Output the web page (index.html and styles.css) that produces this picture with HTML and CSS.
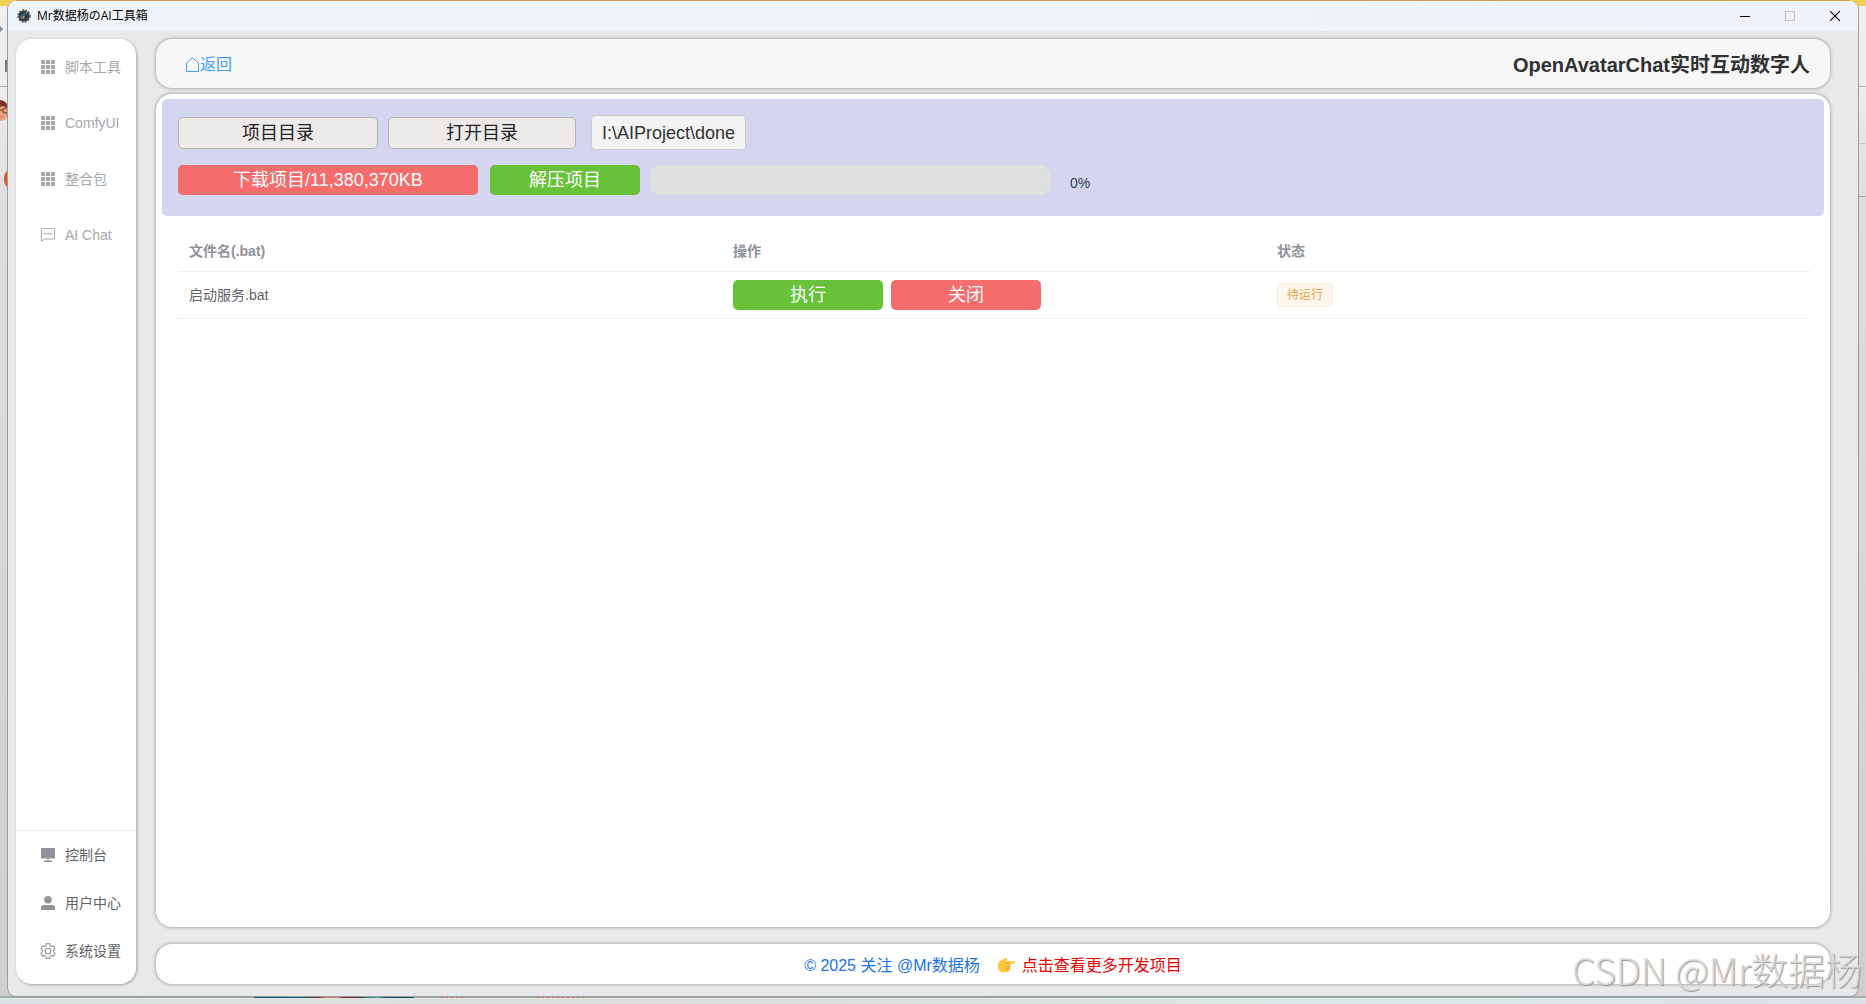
FILE: index.html
```
<!DOCTYPE html>
<html lang="zh-CN">
<head>
<meta charset="utf-8">
<title>Mr数据杨のAI工具箱</title>
<link rel="stylesheet" href="styles.css">
</head>
<body>
<svg class="sprites" aria-hidden="true">
  <symbol id="grid" viewBox="0 0 14 14"><path d="M0 0h4v4H0zM5 0h4v4H5zM10 0h4v4h-4zM0 5h4v4H0zM5 5h4v4H5zM10 5h4v4h-4zM0 10h4v4H0zM5 10h4v4H5zM10 10h4v4h-4z" fill="currentColor"/></symbol>
</svg>

<div class="desktop" aria-hidden="true">
  <span class="peek tab-left"></span>
  <span class="peek tab-right"></span>
  <svg class="peek avatar" viewBox="0 0 8 21"><path d="M0 5h8v12l-3 3-5 1z" fill="#e5a27c"/><path d="M0 0l4 1 4 4v3L3 6 0 7z" fill="#7c3029"/><rect x="3" y="8" width="5" height="5" rx="2" fill="none" stroke="#5c3a2c"/><path d="M0 10h3" stroke="#5c3a2c"/><path d="M0 17h3" stroke="#d4536a"/></svg>
  <svg class="peek glyph" viewBox="0 0 8 12"><path d="M8 1H6v10h2" fill="none" stroke="#555" stroke-width="1.5"/></svg>
  <svg class="peek arrow" viewBox="0 0 3 6"><path d="M0 0l3 3-3 3z" fill="#888"/></svg>
  <svg class="peek dot" viewBox="0 0 8 26"><circle cx="13" cy="13" r="13" fill="#e35330"/></svg>
  <span class="peek strip"></span>
  <span class="peek strip-text one"></span>
  <span class="peek strip-text two"></span>
</div>

<div class="window">
  <header class="titlebar">
    <svg class="app-icon" viewBox="0 0 14 14"><circle cx="7" cy="7" r="5.5" fill="#343a40"/><circle cx="7" cy="7" r="6" fill="none" stroke="#555b60" stroke-width="1.5" stroke-dasharray="2 1.2"/><path d="M3 8l4-4 1 2-3 4z" fill="#2c7d9c"/><path d="M5 9l2-2 1 1-2 2z" fill="#d8a838"/><path d="M8 4l2-1v2z" fill="#a99c8a"/></svg>
    <span class="app-name">Mr数据杨のAI工具箱</span>
    <button class="win-btn" aria-label="最小化"><svg viewBox="0 0 10 10"><path d="M0 5.5h10" stroke="#000"/></svg></button>
    <button class="win-btn" aria-label="最大化" disabled><svg viewBox="0 0 10 10"><rect x=".5" y=".5" width="9" height="9" fill="none" stroke="#bfc3c8"/></svg></button>
    <button class="win-btn" aria-label="关闭窗口"><svg viewBox="0 0 10 10"><path d="M0 0l10 10M10 0L0 10" stroke="#000" stroke-width="1.1"/></svg></button>
  </header>

  <div class="app">
    <aside class="sidebar">
      <nav class="nav-top">
        <a href="#scripts"><svg><use href="#grid"/></svg>脚本工具</a>
        <a href="#comfyui"><svg><use href="#grid"/></svg>ComfyUI</a>
        <a href="#packages"><svg><use href="#grid"/></svg>整合包</a>
        <a href="#chat"><svg viewBox="0 0 14 14"><path d="M.5 13.5v-12a1 1 0 0 1 1-1h11a1 1 0 0 1 1 1v8.500a1 1 0 0 1-1 1H3.500z" fill="none" stroke="currentColor"/><path d="M3 5h2v1.500H3zM6 5h2v1.500H6zM9 5h2v1.500H9z" fill="currentColor"/></svg>AI Chat</a>
      </nav>
      <nav class="nav-bottom">
        <a href="#console"><svg viewBox="0 0 14 14"><path d="M0 0h14v10.500H0zM6.300 10.500h1.400v2h3.300V14H3v-1.500h3.300z" fill="currentColor"/></svg>控制台</a>
        <a href="#user"><svg viewBox="0 0 14 14"><circle cx="7" cy="3.800" r="3.800" fill="currentColor"/><path d="M0 14v-2a3 3 0 0 1 3-3h8a3 3 0 0 1 3 3v2z" fill="currentColor"/></svg>用户中心</a>
        <a href="#settings"><svg viewBox="0 0 1024 1024" class="gear"><path fill="currentColor" d="M600.704 64a32 32 0 0 1 30.464 22.208l35.200 109.376c14.784 7.232 28.928 15.360 42.432 24.512l112.384-24.192a32 32 0 0 1 34.432 15.360L944.320 364.800a32 32 0 0 1-4.032 37.504l-77.120 85.120a357.120 357.120 0 0 1 0 49.024l77.120 85.248a32 32 0 0 1 4.032 37.504l-88.704 153.600a32 32 0 0 1-34.432 15.296L708.800 803.904c-13.440 9.088-27.648 17.280-42.368 24.512l-35.264 109.376A32 32 0 0 1 600.704 960H423.296a32 32 0 0 1-30.464-22.208L357.696 828.480a351.616 351.616 0 0 1-42.560-24.640l-112.320 24.256a32 32 0 0 1-34.432-15.360L79.680 659.200a32 32 0 0 1 4.032-37.504l77.120-85.248a357.120 357.120 0 0 1 0-48.896l-77.120-85.248A32 32 0 0 1 79.680 364.800l88.704-153.600a32 32 0 0 1 34.432-15.296l112.320 24.256c13.568-9.152 27.776-17.408 42.560-24.640l35.200-109.312A32 32 0 0 1 423.232 64H600.640zm-23.424 64H446.720l-36.352 113.088-24.512 11.968a294.113 294.113 0 0 0-34.816 20.096l-22.656 15.360-116.224-25.088-65.280 113.152 79.680 88.192-1.920 27.136a293.120 293.120 0 0 0 0 40.192l1.920 27.136-79.808 88.192 65.344 113.152 116.224-25.024 22.656 15.296a294.113 294.113 0 0 0 34.816 20.096l24.512 11.968L446.720 896h130.688l36.480-113.152 24.448-11.904a288.282 288.282 0 0 0 34.752-20.096l22.592-15.296 116.288 25.024 65.280-113.152-79.744-88.192 1.920-27.136a293.120 293.120 0 0 0 0-40.256l-1.920-27.136 79.808-88.128-65.344-113.152-116.288 24.960-22.592-15.232a287.616 287.616 0 0 0-34.752-20.096l-24.448-11.904L577.344 128zM512 320a192 192 0 1 1 0 384 192 192 0 0 1 0-384zm0 64a128 128 0 1 0 0 256 128 128 0 0 0 0-256z"/></svg>系统设置</a>
      </nav>
    </aside>

    <div class="content">
      <header class="card page-head">
        <a class="back" href="#home"><svg viewBox="0 0 13 15"><path d="M.5 14.500V6l6-5.300 6 5.300v8.500z" fill="none" stroke="currentColor"/></svg>返回</a>
        <h1>OpenAvatarChat实时互动数字人</h1>
      </header>

      <main class="card main">
        <section class="panel">
          <div class="row paths">
            <button class="btn plain wide">项目目录</button>
            <button class="btn plain">打开目录</button>
            <input class="path" type="text" value="I:\AIProject\done" aria-label="项目路径" readonly>
          </div>
          <div class="row downloads">
            <button class="btn red download">下载项目/11,380,370KB</button>
            <button class="btn green">解压项目</button>
            <progress value="0" max="100" aria-label="下载进度"></progress>
            <span class="percent">0%</span>
          </div>
        </section>

        <table>
          <thead>
            <tr><th>文件名(.bat)</th><th>操作</th><th>状态</th></tr>
          </thead>
          <tbody>
            <tr>
              <td>启动服务.bat</td>
              <td><div class="actions"><button class="btn green">执行</button><button class="btn red">关闭</button></div></td>
              <td><span class="tag">待运行</span></td>
            </tr>
          </tbody>
        </table>
      </main>

      <footer class="card foot">
        <a class="follow" href="#follow">© 2025 关注 @Mr数据杨</a>
        <a class="more" href="#more"><svg viewBox="0 0 17 15"><path d="M0 7c0-3 2-5 5-5.500L8 0c1 0 1.500 1 1 2L8 3h8c1.300 0 1.300 2.600 0 2.600h-4.500c1.500.2 1.500 2.500.2 2.800 1.300.4 1 2.700-.4 2.800 1 .6.600 2.500-.8 2.500L6 14.500C2.500 15 0 12 0 9z" fill="#ffc83d"/><path d="M8 5.700h4M8 8.500h4M8 11.300h3.500" stroke="#d9922b" stroke-width=".9" fill="none"/></svg>点击查看更多开发项目</a>
      </footer>
    </div>
  </div>
</div>
<div class="watermark">CSDN @Mr数据杨</div>
</body>
</html>
```
FILE: styles.css
```
* { box-sizing: border-box; }

body {
  margin: 0;
  min-height: 100vh;
  display: flex;
  flex-direction: column;
  position: relative;
  overflow: hidden;
  font-family: "Liberation Sans", "Noto Sans CJK SC", sans-serif;
  font-size: 14px;
  line-height: 20px;
  color: #2c3e50;
}

a { color: inherit; text-decoration: none; }
button, input { font: inherit; }
.sprites { position: absolute; width: 0; height: 0; }

/* What shows of the desktop around the window */
.desktop {
  position: absolute;
  inset: 0;
  overflow: hidden;
  background:
    linear-gradient(90deg, #dce5e5, #dde0dc 35%, #d9e8e6 70%, #dce4ea) bottom / 100% 6px no-repeat,
    linear-gradient(#aaa, #aaa) 0 calc(100% - 6px) / 100% 2px no-repeat,
    linear-gradient(#c4a34c, #c4a34c) top / 100% 1px no-repeat,
    linear-gradient(#efefef 86px, #e5e5e5 135px, #dcddde 220px, #cfcfcf);
}
.peek { position: absolute; }
.tab-left, .tab-right {
  top: 0;
  width: 16px;
  height: 87px;
  border-top: 6px solid #f3cf56;
  border-bottom: 1px solid #aaa;
}
.tab-left { left: 0; }
.tab-right { right: 0; height: 197px; background: linear-gradient(#b5b5b5, #b5b5b5) 0 80px / 100% 1px no-repeat, linear-gradient(#c6c6c6, #c6c6c6) 0 137px / 100% 1px no-repeat; }
.avatar { left: 0; top: 100px; width: 8px; height: 21px; }
.glyph { left: 0; top: 60px; width: 8px; height: 12px; }
.arrow { left: 0; top: 26px; width: 3px; height: 6px; }
.dot { left: 4px; top: 166px; width: 8px; height: 26px; }
.strip {
  left: 254px;
  bottom: 6px;
  width: 160px;
  height: 2px;
  background: linear-gradient(90deg, #1f6379 33%, #6b3a38 34% 40%, #b58a72 45% 53%, #662f2d 55% 67%, #2a6d7c 70%, #3f9c9d 78%, #164a63 82%);
}
.strip-text { bottom: 6px; height: 2px; background: repeating-linear-gradient(90deg, #c97a6a 0 2px, #b8b0ad 2px 5px); }
.one { left: 441px; width: 24px; }
.two { left: 537px; width: 48px; }

.window {
  position: relative;
  flex: 1;
  display: flex;
  flex-direction: column;
  margin: 1px 8px 8px;
  border-radius: 8px;
  overflow: hidden;
  background: #e8e9eb;
  box-shadow: 0 0 0 1px #9c9c9c;
  clip-path: inset(0 -1px -1px -1px round 8px);
}

.titlebar {
  display: flex;
  align-items: center;
  height: 30px;
  padding: 0 1px 0 9px;
  background: linear-gradient(90deg, #eff4f8, #eef4f8 70%, #eef2fb);
}
.app-icon { width: 14px; height: 14px; }
.app-name {
  flex: 1;
  margin-left: 6px;
  font-family: "Open Sans", "Noto Sans CJK SC", sans-serif;
  font-size: 12px;
  color: #000;
}
.win-btn {
  width: 45px;
  height: 30px;
  padding: 0;
  border: 0;
  background: none;
}
.win-btn svg { display: block; width: 10px; height: 10px; margin: auto; }

.app {
  flex: 1;
  display: flex;
  gap: 20px;
  padding: 8px 28px 12px 8px;
}

.sidebar {
  flex: none;
  width: 120px;
  display: flex;
  flex-direction: column;
  justify-content: space-between;
  border-radius: 16px;
  background: #fff;
  box-shadow: 1px 1px 3px 0 rgba(0, 0, 0, .3);
}
.sidebar a { display: flex; align-items: center; padding-left: 25px; white-space: nowrap; }
.sidebar svg { flex: none; width: 14px; height: 14px; margin-right: 10px; }
.sidebar .gear { width: 18px; height: 18px; margin: 0 8px 0 -2px; }
.nav-top a { height: 56px; color: #a6a9ad; }
.nav-bottom { padding-bottom: 9px; border-top: 1px solid #ebebed; }
.nav-bottom a { height: 48px; color: #606266; }
.nav-bottom svg { color: #909399; }

.content {
  flex: 1;
  min-width: 0;
  display: flex;
  flex-direction: column;
}
.card {
  border-radius: 16px;
  background: #fff;
  box-shadow: 0 0 3px 1px rgba(0, 0, 0, .25);
}

.page-head {
  display: flex;
  align-items: center;
  justify-content: space-between;
  height: 49px;
  margin-bottom: 6px;
  padding: 2px 20px 0 30px;
  background: #f7f7f7;
}
.back { display: flex; align-items: center; gap: 1px; font-size: 16px; color: #409eff; }
.back svg { width: 13px; height: 15px; }
h1 { margin: 0; font-size: 20px; line-height: 28px; color: #303133; }

.main { flex: 1; padding: 5px 6px; }
.panel { padding: 16px 16px 21px; border-radius: 5px; background: #d4d5ef; }
.row { display: flex; align-items: center; }
.paths { gap: 10px; height: 35px; }
.downloads { gap: 10px; margin-top: 15px; }

.btn {
  width: 150px;
  height: 30px;
  padding: 0;
  border: 0;
  border-radius: 5px;
  font-size: 18px;
  line-height: 30px;
  color: #fff;
}
.green { background: #67c23a; }
.red { background: #f56c6c; }
.plain {
  width: 188px;
  height: 32px;
  border: 1px solid #b9b3a8;
  background: #edeaea;
  color: #222;
}
.wide { width: 200px; }
.download { width: 300px; margin-right: 2px; }
.path {
  width: 155px;
  height: 35px;
  margin-left: 5px;
  padding: 2px 10px 0;
  border: 1px solid #ccc;
  border-radius: 4px;
  background: #f3f3f3;
  font-size: 18px;
  color: #333;
}
progress {
  appearance: none;
  width: 400px;
  height: 30px;
  border: 0;
  border-radius: 10px;
  overflow: hidden;
  background: #e0e0e0;
}
progress::-webkit-progress-bar { background: #e0e0e0; }
progress::-webkit-progress-value { background: #67c23a; }
.percent { margin-left: 10px; padding-top: 6px; }

table {
  width: calc(100% - 30px);
  margin: 15px 14px 0 16px;
  table-layout: fixed;
  border-collapse: collapse;
}
th, td { padding: 0 11px; border-bottom: 1px solid #ebeef5; text-align: left; }
th { height: 40px; color: #909399; }
td { height: 47px; color: #606266; }
.actions { display: flex; gap: 8px; }
.tag {
  display: inline-block;
  height: 24px;
  padding: 0 9px;
  border: 1px solid #faecd8;
  border-radius: 4px;
  background: #fdf6ec;
  font-size: 12px;
  line-height: 22px;
  color: #e6a23c;
}

.foot {
  display: flex;
  align-items: center;
  justify-content: center;
  gap: 18px;
  height: 40px;
  margin-top: 17px;
  padding-top: 3px;
  font-size: 16px;
}
.follow { color: #1a73e8; }
.more { display: flex; align-items: center; gap: 7px; color: #e60000; }
.more svg { width: 17px; height: 15px; }

.watermark {
  position: absolute;
  right: 4px;
  bottom: 11px;
  font: 300 37px/48px "Noto Sans CJK SC", sans-serif;
  color: rgba(222, 222, 222, .85);
  text-shadow: 1px 1px 1px #999;
  pointer-events: none;
}
```
